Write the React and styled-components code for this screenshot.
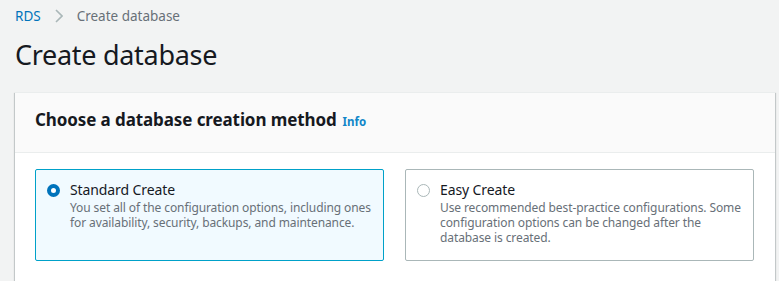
import styled, { createGlobalStyle } from 'styled-components';

const GlobalStyle = createGlobalStyle`
    body {
        margin: 0;
        background: #f2f3f3;
        font-family: 'Noto Sans', 'Open Sans', Arial, sans-serif;
        color: #16191f;
    }
`;

const App = () => {
    return (
        <>
            <GlobalStyle />
            <Page>
                <Breadcrumbs>
                    <CrumbLink>RDS</CrumbLink>
                    <Chevron width="8" height="14" viewBox="0 0 8 14">
                        <path d="M1 1l6 6-6 6" fill="none" stroke="#aab7b8" strokeWidth="1.6" />
                    </Chevron>
                    <CrumbCurrent>Create database</CrumbCurrent>
                </Breadcrumbs>
                <PageTitle>Create database</PageTitle>
                <Card>
                    <CardHeader>
                        <CardTitle>Choose a database creation method</CardTitle>
                        <InfoLink>Info</InfoLink>
                    </CardHeader>
                    <CardBody>
                        <Tile selected>
                            <Radio selected />
                            <TileText>
                                <TileTitle>Standard Create</TileTitle>
                                <TileDesc>
                                    You set all of the configuration options, including ones for availability, security, backups, and maintenance.
                                </TileDesc>
                            </TileText>
                        </Tile>
                        <Tile>
                            <Radio />
                            <TileText>
                                <TileTitle>Easy Create</TileTitle>
                                <TileDesc>
                                    Use recommended best-practice configurations. Some configuration options can be changed after the database is created.
                                </TileDesc>
                            </TileText>
                        </Tile>
                    </CardBody>
                </Card>
            </Page>
        </>
    );
};
export default App;

const Page = styled.div`
    padding: 0 4px 0 15px;
`;

const Breadcrumbs = styled.div`
    display: flex;
    align-items: center;
    height: 20px;
    padding-top: 6px;
    font-size: 13.5px;
    line-height: 20px;
`;

const CrumbLink = styled.span`
    color: #0073bb;
`;

const Chevron = styled.svg`
    margin: 0 14px 0 14px;
`;

const CrumbCurrent = styled.span`
    color: #687078;
`;

const PageTitle = styled.h1`
    margin: 0;
    padding: 10px 0 0;
    font-size: 27px;
    letter-spacing: -0.3px;
    font-weight: 400;
    line-height: 38px;
    height: 56px;
`;

const Card = styled.div`
    background: #fff;
    box-shadow: 0 1px 1px 0 rgba(0, 28, 36, 0.3), 1px 1px 1px 0 rgba(0, 28, 36, 0.15),
        -1px 1px 1px 0 rgba(0, 28, 36, 0.15);
    border-top: 1px solid #eaeded;
`;

const CardHeader = styled.div`
    display: flex;
    align-items: baseline;
    gap: 6px;
    height: 60px;
    box-sizing: border-box;
    padding: 14px 20px 0;
    background: #fafafa;
    border-bottom: 1px solid #eaeded;
`;

const CardTitle = styled.h2`
    margin: 0;
    font-size: 17px;
    letter-spacing: -0.1px;
    font-weight: 700;
    line-height: 26px;
`;

const InfoLink = styled.span`
    color: #0f86c8;
    font-size: 11.5px;
    font-weight: 700;
`;

const CardBody = styled.div`
    display: grid;
    grid-template-columns: 1fr 1fr;
    gap: 21px;
    padding: 16px 21px 20px 20px;
`;

const Tile = styled.div`
    display: flex;
    gap: 10px;
    height: 92px;
    box-sizing: border-box;
    padding: 10px 12px 10px 11px;
    border: 1px solid ${(p) => (p.selected ? '#00a1c9' : '#aab7b8')};
    border-radius: 2px;
    background: ${(p) => (p.selected ? '#f1faff' : '#fff')};
`;

const Radio = styled.span`
    flex: none;
    width: 13px;
    height: 13px;
    box-sizing: border-box;
    margin-top: 4px;
    border-radius: 50%;
    border: ${(p) => (p.selected ? '4px solid #0073bb' : '1px solid #aab7b8')};
    background: #fff;
`;

const TileText = styled.div`
    display: flex;
    flex-direction: column;
`;

const TileTitle = styled.div`
    font-size: 14px;
    letter-spacing: -0.1px;
    line-height: 20px;
`;

const TileDesc = styled.div`
    font-size: 12px;
    letter-spacing: -0.1px;
    line-height: 15px;
    color: #687078;
`;
